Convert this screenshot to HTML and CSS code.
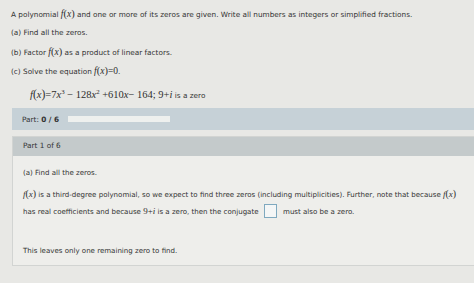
FILE: index.html
```html
<!DOCTYPE html>
<html>
<head>
<meta charset="utf-8">
<link rel="stylesheet" href="styles.css">
</head>
<body>
<div class="page">
  <div class="intro">
    <p class="line l1">A polynomial <span class="m"><i>f</i><span class="paren">(</span><i>x</i><span class="paren">)</span></span> and one or more of its zeros are given. Write all numbers as integers or simplified fractions.</p>
    <p class="line l2">(a) Find all the zeros.</p>
    <p class="line l3">(b) Factor <span class="m"><i>f</i><span class="paren">(</span><i>x</i><span class="paren">)</span></span> as a product of linear factors.</p>
    <p class="line l4">(c) Solve the equation <span class="m"><i>f</i><span class="paren">(</span><i>x</i><span class="paren">)</span>=0</span>.</p>
    <p class="eq"><span class="m big"><i>f</i><span class="paren">(</span><i>x</i><span class="paren">)</span>=7<i>x</i><sup>3</sup> − 128<i>x</i><sup>2</sup> +610<i>x</i>− 164; 9+<i>i</i></span> is a zero</p>
  </div>
  <div class="partbar">
    <span class="partlabel">Part: <b>0 / 6</b></span>
    <div class="progress"></div>
  </div>
  <div class="panel">
    <div class="panelhead">Part 1 of 6</div>
    <div class="panelbody">
      <p class="pa">(a) Find all the zeros.</p>
      <p class="pb"><span class="m"><i>f</i><span class="paren">(</span><i>x</i><span class="paren">)</span></span> is a third-degree polynomial, so we expect to find three zeros (including multiplicities). Further, note that because <span class="m"><i>f</i><span class="paren">(</span><i>x</i><span class="paren">)</span></span></p>
      <p class="pb">has real coefficients and because <span class="m">9+<i>i</i></span> is a zero, then the conjugate <span class="box"></span> must also be a zero.</p>
      <p class="pc">This leaves only one remaining zero to find.</p>
    </div>
  </div>
</div>
</body>
</html>
```
FILE: styles.css
```css
html, body {
  margin: 0;
  padding: 0;
  background: #e8e8e5;
}
body {
  width: 474px;
  height: 283px;
  overflow: hidden;
  font-family: "DejaVu Sans", Verdana, sans-serif;
  font-size: 7.3px;
  color: #333;
}
.page {
  padding-top: 9px;
}
p { margin: 0; }
.intro {
  padding-left: 11px;
}
.line {
  height: 19px;
  line-height: 10px;
}
.m {
  font-family: "Liberation Serif", serif;
  font-size: 9.5px;
  color: #2e2e2e;
}
.m.big {
  font-size: 10.5px;
}
.paren {
  font-size: 1.1em;
}
sup {
  font-size: 0.65em;
  line-height: 0;
  vertical-align: 4px;
}
.eq {
  padding-left: 19px;
  margin-top: 3px;
  line-height: 12px;
  height: 12px;
}
.partbar {
  margin-top: 8px;
  margin-left: 12px;
  height: 22px;
  background: #c6d1d7;
  display: flex;
  align-items: center;
  padding-left: 10px;
  gap: 9px;
}
.partlabel b {
  font-weight: bold;
}
.progress {
  width: 102px;
  height: 6px;
  background: #eef0ee;
}
.panel {
  margin-top: 6px;
  margin-left: 12px;
  border: 1px solid #d2d4d2;
  border-right: none;
  background: #eeeeeb;
}
.panelhead {
  height: 19px;
  background: #c4cacb;
  padding-left: 10px;
  line-height: 17px;
}
.panelbody {
  padding: 12px 0 9px 10px;
  font-size: 7.05px;
}
.panelbody .m {
  font-size: 9px;
}
.pa {
  line-height: 10px;
  height: 17px;
}
.pb {
  line-height: 17px;
  white-space: nowrap;
}
.box {
  display: inline-block;
  width: 11px;
  height: 12px;
  border: 1px solid #7fa9bf;
  background: #f4f6f6;
  vertical-align: -4px;
  margin: 0 4px 0 3px;
}
.pc {
  margin-top: 26px;
  line-height: 10px;
}
```
